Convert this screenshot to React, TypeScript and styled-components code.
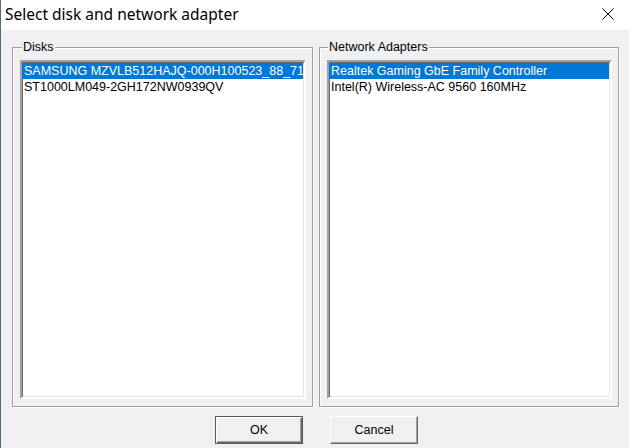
import React, { useState } from 'react';
import styled, { createGlobalStyle } from 'styled-components';

const GlobalStyle = createGlobalStyle`
  html, body {
    margin: 0;
    padding: 0;
    background: #f0f0f0;
  }
`;

const Window = styled.div`
  width: 628px;
  height: 448px;
  border-left: 1px solid #56697a;
  display: flex;
  flex-direction: column;
  background: #f0f0f0;
  overflow: hidden;
`;

const TitleBar = styled.div`
  height: 30px;
  flex: none;
  background: #ffffff;
  display: flex;
  align-items: center;
  justify-content: space-between;
  padding: 0 0 0 4px;
`;

const Title = styled.span`
  font-family: 'Noto Sans', 'Liberation Sans', sans-serif;
  font-size: 15.5px;
  color: #000000;
  margin-top: -2px;
`;

const CloseButton = styled.button`
  width: 46px;
  height: 30px;
  border: none;
  background: transparent;
  padding: 0;
  display: flex;
  align-items: center;
  justify-content: center;
  margin-right: -2px;
  margin-top: -2px;
`;

const Body = styled.div`
  flex: 1;
  display: flex;
  flex-direction: column;
  padding: 10px 0 0 11px;
`;

const Groups = styled.div`
  display: flex;
  gap: 6px;
`;

const Group = styled.fieldset<{ $width: number }>`
  width: ${p => p.$width}px;
  min-width: 0;
  flex: none;
  box-sizing: border-box;
  margin: 0;
  height: 367px;
  padding: 6px 6px 7px 7px;
  border: 1px solid #a0a0a0;
  box-shadow: inset 1px 1px #ffffff, 1px 1px #ffffff;
  display: flex;
  flex-direction: column;
`;

const Legend = styled.legend<{ $offset: number }>`
  font-family: 'Liberation Sans', Arial, sans-serif;
  font-size: 12.5px;
  line-height: 14px;
  color: #000000;
  padding: 0 1px;
  margin-left: ${p => p.$offset}px;
  background: #f0f0f0;
`;

const ListBox = styled.div`
  flex: 1;
  min-width: 0;
  background: #ffffff;
  border-style: solid;
  border-width: 2px;
  border-color: #a0a0a0 #ffffff #ffffff #a0a0a0;
  box-shadow: inset 1px 1px #696969, inset -1px -1px #e3e3e3;
  padding: 1px 1px 0 0;
  overflow: hidden;
`;

const Item = styled.div<{ $selected?: boolean }>`
  height: 16px;
  line-height: 16px;
  padding-left: 2px;
  font-family: 'Liberation Sans', Arial, sans-serif;
  font-size: 12.5px;
  white-space: nowrap;
  overflow: hidden;
  color: ${p => (p.$selected ? '#ffffff' : '#000000')};
  background: ${p => (p.$selected ? '#0078d7' : 'transparent')};
  cursor: default;
`;

const Buttons = styled.div`
  display: flex;
  gap: 27px;
  padding: 9px 0 0 203px;
`;

const Button = styled.button<{ $default?: boolean }>`
  width: 88px;
  height: 28px;
  box-sizing: border-box;
  font-family: 'Liberation Sans', Arial, sans-serif;
  font-size: 12.5px;
  color: #000000;
  background: #f0f0f0;
  padding: 0;
  border: 1px solid ${p => (p.$default ? '#5a5a5a' : '#ffffff')};
  ${p =>
    p.$default
      ? 'box-shadow: inset 1px 1px #ffffff, inset -1px -1px #696969, inset -2px -2px #a0a0a0;'
      : 'border-right-color: #696969; border-bottom-color: #696969; box-shadow: inset -1px -1px #a0a0a0;'}
`;

const disks = [
  'SAMSUNG MZVLB512HAJQ-000H100523_88_7192',
  'ST1000LM049-2GH172NW0939QV',
];

const adapters = [
  'Realtek Gaming GbE Family Controller',
  'Intel(R) Wireless-AC 9560 160MHz',
];

export default function App() {
  const [disk, setDisk] = useState(0);
  const [adapter, setAdapter] = useState(0);

  return (
    <>
      <GlobalStyle />
      <Window>
        <TitleBar>
          <Title>Select disk and network adapter</Title>
          <CloseButton aria-label='close'>
            <svg width='12' height='12' viewBox='0 0 12 12'>
              <path d='M0.5 0.5 L11.5 11.5 M11.5 0.5 L0.5 11.5' stroke='#000' strokeWidth='1' fill='none' />
            </svg>
          </CloseButton>
        </TitleBar>
        <Body>
          <Groups>
            <Group $width={301}>
              <Legend $offset={2}>Disks</Legend>
              <ListBox>
                {disks.map((d, i) => (
                  <Item key={d} $selected={i === disk} onClick={() => setDisk(i)}>{d}</Item>
                ))}
              </ListBox>
            </Group>
            <Group $width={300}>
              <Legend $offset={1}>Network Adapters</Legend>
              <ListBox>
                {adapters.map((a, i) => (
                  <Item key={a} $selected={i === adapter} onClick={() => setAdapter(i)}>{a}</Item>
                ))}
              </ListBox>
            </Group>
          </Groups>
          <Buttons>
            <Button $default>OK</Button>
            <Button>Cancel</Button>
          </Buttons>
        </Body>
      </Window>
    </>
  );
}
